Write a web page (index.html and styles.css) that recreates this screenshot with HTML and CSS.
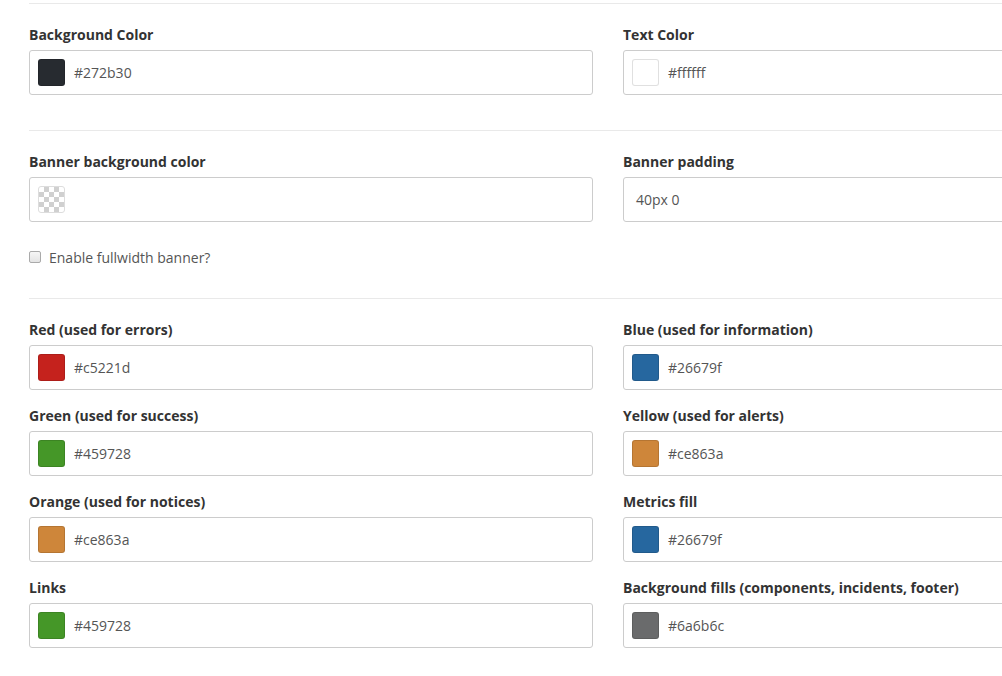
FILE: index.html
```html
<!DOCTYPE html>
<html>
<head>
<meta charset="utf-8">
<link rel="stylesheet" href="styles.css">
</head>
<body>
<div class="page">
  <hr class="rule first">
  <div class="grid">
    <div class="field">
      <label class="lbl">Background Color</label>
      <div class="input"><span class="sw" style="background:#272b30"></span><span class="val">#272b30</span></div>
    </div>
    <div class="field">
      <label class="lbl">Text Color</label>
      <div class="input"><span class="sw" style="background:#ffffff"></span><span class="val">#ffffff</span></div>
    </div>
  </div>
  <hr class="rule">
  <div class="grid">
    <div class="field">
      <label class="lbl">Banner background color</label>
      <div class="input"><span class="sw checker"></span></div>
    </div>
    <div class="field">
      <label class="lbl">Banner padding</label>
      <div class="input plain"><span class="val">40px 0</span></div>
    </div>
  </div>
  <div class="check"><span class="box"></span><span class="check-text">Enable fullwidth banner?</span></div>
  <hr class="rule">
  <div class="grid">
    <div class="field">
      <label class="lbl">Red (used for errors)</label>
      <div class="input"><span class="sw" style="background:#c5221d"></span><span class="val">#c5221d</span></div>
    </div>
    <div class="field">
      <label class="lbl">Blue (used for information)</label>
      <div class="input"><span class="sw" style="background:#26679f"></span><span class="val">#26679f</span></div>
    </div>
    <div class="field">
      <label class="lbl">Green (used for success)</label>
      <div class="input"><span class="sw" style="background:#459728"></span><span class="val">#459728</span></div>
    </div>
    <div class="field">
      <label class="lbl">Yellow (used for alerts)</label>
      <div class="input"><span class="sw" style="background:#ce863a"></span><span class="val">#ce863a</span></div>
    </div>
    <div class="field">
      <label class="lbl">Orange (used for notices)</label>
      <div class="input"><span class="sw" style="background:#ce863a"></span><span class="val">#ce863a</span></div>
    </div>
    <div class="field">
      <label class="lbl">Metrics fill</label>
      <div class="input"><span class="sw" style="background:#26679f"></span><span class="val">#26679f</span></div>
    </div>
    <div class="field">
      <label class="lbl">Links</label>
      <div class="input"><span class="sw" style="background:#459728"></span><span class="val">#459728</span></div>
    </div>
    <div class="field">
      <label class="lbl">Background fills (components, incidents, footer)</label>
      <div class="input"><span class="sw" style="background:#6a6b6c"></span><span class="val">#6a6b6c</span></div>
    </div>
  </div>
</div>
</body>
</html>
```

FILE: styles.css
```css
html, body {
  margin: 0;
  padding: 0;
  background: #fff;
  overflow: hidden;
}
body {
  font-family: "Open Sans", "Liberation Sans", sans-serif;
  font-size: 14px;
  color: #333;
  width: 1002px;
  height: 676px;
}
.page {
  padding-left: 29px;
  width: 1200px;
}
.rule {
  border: 0;
  border-top: 1px solid #e9e9e9;
  margin: 0;
  height: 0;
}
.rule.first {
  margin-top: 3px;
}
.grid {
  display: grid;
  grid-template-columns: 564px 564px;
  column-gap: 30px;
  padding-top: 21px;
  padding-bottom: 19px;
}
.field {
  display: flex;
  flex-direction: column;
  margin-bottom: 16px;
}
.lbl {
  font-weight: 700;
  line-height: 20px;
  margin-bottom: 5px;
  color: #333;
}
.input {
  box-sizing: border-box;
  height: 45px;
  border: 1px solid #ccc;
  border-radius: 3px;
  display: flex;
  align-items: center;
  padding: 0 8px;
  gap: 9px;
}
.input.plain {
  padding: 0 12px;
}
.val {
  color: #555;
  line-height: 20px;
}
.sw {
  box-sizing: border-box;
  width: 27px;
  height: 27px;
  border-radius: 3px;
  border: 1px solid rgba(0,0,0,0.12);
  flex: none;
}
.sw.checker {
  background-color: #fff;
  background-image: conic-gradient(#d0d0d0 25%, #fff 25% 50%, #d0d0d0 50% 75%, #fff 75%);
  background-size: 10px 10px;
  border-color: #ddd;
}
.grid + .check {
  margin-top: -10px;
}
.check {
  display: flex;
  align-items: center;
  gap: 8px;
  height: 20px;
  margin-bottom: 31px;
}
.box {
  box-sizing: border-box;
  width: 12px;
  height: 12px;
  border: 1px solid #aaa;
  border-radius: 2px;
  background: linear-gradient(#f6f6f6, #e4e4e4);
}
.check-text {
  color: #555;
}
```
